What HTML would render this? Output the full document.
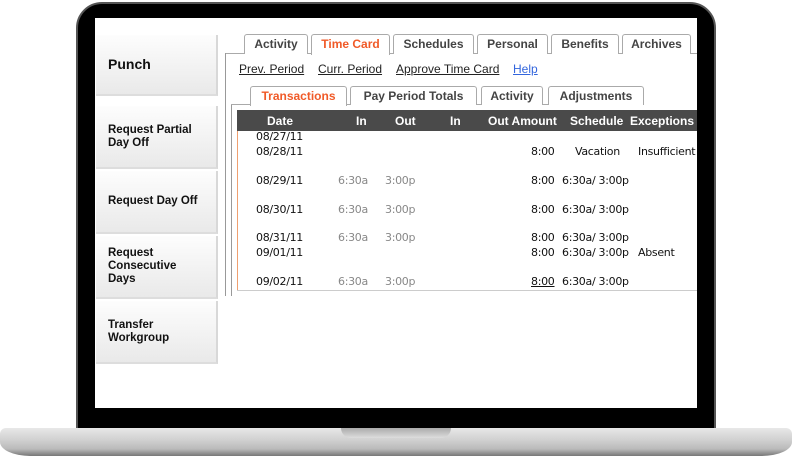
<!DOCTYPE html>
<html><head><style>
*{margin:0;padding:0;box-sizing:border-box}
body{width:792px;height:456px;background:#fff;position:relative;overflow:hidden;font-family:"Liberation Sans",sans-serif}
.a{position:absolute}
.bezel{left:76px;top:2px;width:640px;height:432px;background:#000;border-radius:26px 26px 4px 4px;border:2px solid #555}
.screen{left:95px;top:18px;width:602px;height:390px;background:#fff;overflow:hidden}
.base{left:0;top:428px;width:792px;height:28px;background:linear-gradient(#e8e8e8,#d2d2d2 40%,#bababa 75%,#777);border-radius:6px 6px 30px 30px/6px 6px 14px 14px}
.notch{left:341px;top:428px;width:110px;height:10px;background:linear-gradient(#aaa,#ddd);border-radius:0 0 10px 10px}
.btn{left:1px;width:122px;background:linear-gradient(#fdfdfd,#e9e9e9);border-right:2px solid #d8d8d8;border-bottom:2px solid #ddd;font-weight:bold;font-size:11.5px;color:#111;padding-left:12px;display:flex;align-items:center;line-height:13px}
.tab{top:16px;height:20px;border:1px solid #aaa;border-bottom:none;border-radius:3px 3px 0 0;font-weight:bold;font-size:12px;color:#444;text-align:center;line-height:19px;background:#fff}
.st{top:68px;height:19px;border:1px solid #aaa;border-bottom:none;border-radius:3px 3px 0 0;font-weight:bold;font-size:12px;color:#444;text-align:center;line-height:18px;background:#fff}
.lk{top:44px;font-size:12px;color:#222;text-decoration:underline}
.hd{top:92px;left:142px;width:460px;height:21px;background:#4a4a4a}
.h{top:96px;color:#fff;font-weight:bold;font-size:12px}
.c{font-size:11px;color:#111;font-family:"DejaVu Sans",sans-serif;letter-spacing:-0.3px}
.g{color:#888}
</style></head><body>
<div class="a bezel"></div>
<div class="a base"></div>
<div class="a notch"></div>
<div class="a screen">
 <div class="a btn" style="top:17px;height:61px;font-size:14px">Punch</div>
 <div class="a btn" style="top:88px;height:63px">Request Partial<br>Day Off</div>
 <div class="a btn" style="top:153px;height:63px">Request Day Off</div>
 <div class="a btn" style="top:218px;height:63px">Request<br>Consecutive<br>Days</div>
 <div class="a btn" style="top:283px;height:63px">Transfer<br>Workgroup</div>

 <div class="a" style="left:130px;top:35px;width:472px;height:1px;background:#aaa"></div>
 <div class="a" style="left:130px;top:35px;width:1px;height:243px;background:#999"></div>
 <div class="a" style="left:136px;top:86px;width:1px;height:192px;background:#999"></div>
 <div class="a" style="left:136px;top:86px;width:412px;height:1px;background:#aaa"></div>
 <div class="a tab" style="left:149px;width:64px">Activity</div>
 <div class="a tab" style="left:216px;width:79px;color:#f05a28;height:21px">Time Card</div>
 <div class="a tab" style="left:298px;width:81px">Schedules</div>
 <div class="a tab" style="left:382px;width:71px">Personal</div>
 <div class="a tab" style="left:456px;width:68px">Benefits</div>
 <div class="a tab" style="left:527px;width:69px">Archives</div>

 <div class="a lk" style="left:144px">Prev. Period</div>
 <div class="a lk" style="left:223px">Curr. Period</div>
 <div class="a lk" style="left:301px">Approve Time Card</div>
 <div class="a lk" style="left:418px;color:#3366dd">Help</div>

 <div class="a st" style="left:155px;width:97px;color:#f05a28;height:20px">Transactions</div>
 <div class="a st" style="left:255px;width:127px">Pay Period Totals</div>
 <div class="a st" style="left:386px;width:62px">Activity</div>
 <div class="a st" style="left:453px;width:96px">Adjustments</div>

 <div class="a hd"></div>
 <div class="a" style="left:142px;top:113px;width:1px;height:159px;background:#f0a070"></div>
 <div class="a" style="left:142px;top:272px;width:460px;height:1px;background:#ccc"></div>
 <div class="a h" style="left:172px">Date</div>
 <div class="a h" style="left:261px">In</div>
 <div class="a h" style="left:300px">Out</div>
 <div class="a h" style="left:355px">In</div>
 <div class="a h" style="left:393px">Out Amount</div>
 <div class="a h" style="left:475px">Schedule</div>
 <div class="a h" style="left:535px">Exceptions</div>

 <div class="a c" style="left:161px;top:112px">08/27/11</div>
 <div class="a c" style="left:161px;top:127px">08/28/11</div>
 <div class="a c" style="left:436px;top:127px">8:00</div>
 <div class="a c" style="left:480px;top:127px">Vacation</div>
 <div class="a c" style="left:543px;top:127px">Insufficient</div>

 <div class="a c" style="left:161px;top:156px">08/29/11</div>
 <div class="a c g" style="left:243px;top:156px">6:30a</div>
 <div class="a c g" style="left:290px;top:156px">3:00p</div>
 <div class="a c" style="left:436px;top:156px">8:00</div><div class="a c" style="left:467px;top:156px">6:30a/ 3:00p</div>

 <div class="a c" style="left:161px;top:185px">08/30/11</div>
 <div class="a c g" style="left:243px;top:185px">6:30a</div>
 <div class="a c g" style="left:290px;top:185px">3:00p</div>
 <div class="a c" style="left:436px;top:185px">8:00</div><div class="a c" style="left:467px;top:185px">6:30a/ 3:00p</div>

 <div class="a c" style="left:161px;top:213px">08/31/11</div>
 <div class="a c g" style="left:243px;top:213px">6:30a</div>
 <div class="a c g" style="left:290px;top:213px">3:00p</div>
 <div class="a c" style="left:436px;top:213px">8:00</div><div class="a c" style="left:467px;top:213px">6:30a/ 3:00p</div>
 <div class="a c" style="left:161px;top:228px">09/01/11</div>
 <div class="a c" style="left:436px;top:228px">8:00</div><div class="a c" style="left:467px;top:228px">6:30a/ 3:00p</div>
 <div class="a c" style="left:543px;top:228px">Absent</div>

 <div class="a c" style="left:161px;top:257px">09/02/11</div>
 <div class="a c g" style="left:243px;top:257px">6:30a</div>
 <div class="a c g" style="left:290px;top:257px">3:00p</div>
 <div class="a c" style="left:436px;top:257px"><u>8:00</u></div><div class="a c" style="left:467px;top:257px">6:30a/ 3:00p</div>
</div>
</body></html>
